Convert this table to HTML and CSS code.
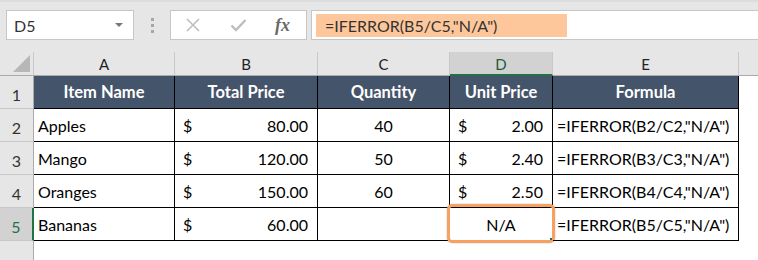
FILE: index.html
```html
<!DOCTYPE html>
<html>
<head>
<meta charset="utf-8">
<link rel="stylesheet" href="styles.css">
</head>
<body>
<div class="app">
  <div class="toolbar">
    <div class="namebox">
      <span class="cellref">D5</span>
      <span class="caret"></span>
    </div>
    <div class="grip"><i></i><i></i><i></i></div>
    <div class="fxbuttons">
      <svg class="btn" width="16" height="16" viewBox="0 0 16 16"><path d="M2 2 L14 14 M14 2 L2 14" stroke="#bdbdbd" stroke-width="1.6" fill="none"/></svg>
      <svg class="btn" width="17" height="16" viewBox="0 0 17 16"><path d="M1.5 8.5 L6 13 L15.5 3" stroke="#bdbdbd" stroke-width="2.4" fill="none"/></svg>
      <span class="fx">fx</span>
    </div>
    <div class="formulabar">
      <span class="formula">=IFERROR(B5/C5,"N/A")</span>
    </div>
  </div>

  <div class="sheet">
    <div class="corner"><span class="tri"></span></div>
    <div class="colhead">A</div>
    <div class="colhead">B</div>
    <div class="colhead">C</div>
    <div class="colhead active">D</div>
    <div class="colhead">E</div>
    <div class="colhead filler"></div>

    <div class="rowhead">1</div>
    <div class="cell th">Item Name</div>
    <div class="cell th">Total Price</div>
    <div class="cell th">Quantity</div>
    <div class="cell th">Unit Price</div>
    <div class="cell th">Formula</div>
    <div class="blank"></div>

    <div class="rowhead">2</div>
    <div class="cell">Apples</div>
    <div class="cell money"><span>$</span><span>80.00</span></div>
    <div class="cell center">40</div>
    <div class="cell money"><span>$</span><span>2.00</span></div>
    <div class="cell">=IFERROR(B2/C2,"N/A")</div>
    <div class="blank"></div>

    <div class="rowhead">3</div>
    <div class="cell">Mango</div>
    <div class="cell money"><span>$</span><span>120.00</span></div>
    <div class="cell center">50</div>
    <div class="cell money"><span>$</span><span>2.40</span></div>
    <div class="cell">=IFERROR(B3/C3,"N/A")</div>
    <div class="blank"></div>

    <div class="rowhead">4</div>
    <div class="cell">Oranges</div>
    <div class="cell money"><span>$</span><span>150.00</span></div>
    <div class="cell center">60</div>
    <div class="cell money"><span>$</span><span>2.50</span></div>
    <div class="cell">=IFERROR(B4/C4,"N/A")</div>
    <div class="blank"></div>

    <div class="rowhead active">5</div>
    <div class="cell">Bananas</div>
    <div class="cell money"><span>$</span><span>60.00</span></div>
    <div class="cell center"></div>
    <div class="cell center selected">N/A<span class="focus"><span class="handle"></span></span></div>
    <div class="cell">=IFERROR(B5/C5,"N/A")</div>
    <div class="blank"></div>

    <div class="rowhead rest"></div>
    <div class="blank"></div>
    <div class="blank"></div>
    <div class="blank"></div>
    <div class="blank"></div>
    <div class="blank"></div>
    <div class="blank"></div>
  </div>
</div>
</body>
</html>
```

FILE: styles.css
```css
* { box-sizing: border-box; }

html, body {
  margin: 0;
  padding: 0;
  background: #ffffff;
}

.app {
  width: 758px;
  height: 260px;
  overflow: hidden;
  font-family: Lato, "Open Sans", sans-serif;
  color: #000;
}

/* ---------- formula bar strip ---------- */
.toolbar {
  height: 52px;
  background: #e6e6e6;
  border-top: 2px solid #dcdcdc;
  display: flex;
  align-items: flex-start;
  padding-top: 8px;
  padding-left: 6px;
}

.namebox {
  width: 128px;
  height: 30px;
  background: #fff;
  border: 1px solid #c6c6c6;
  display: flex;
  align-items: center;
  justify-content: space-between;
  padding: 0 10px 0 7px;
}

.cellref {
  font-size: 16px;
  color: #333;
}

.caret {
  width: 0;
  height: 0;
  border-left: 4px solid transparent;
  border-right: 4px solid transparent;
  border-top: 4px solid #777;
}

.grip {
  width: 36px;
  height: 30px;
  display: flex;
  flex-direction: column;
  align-items: center;
  justify-content: center;
  gap: 3px;
}

.grip i {
  display: block;
  width: 3px;
  height: 3px;
  background: #a6a6a6;
}

.fxbuttons {
  width: 137px;
  height: 30px;
  background: #fff;
  border: 1px solid #c6c6c6;
  display: flex;
  align-items: center;
  padding-left: 14px;
  gap: 29px;
}

.fx {
  font-family: "Liberation Serif", serif;
  font-style: italic;
  font-weight: 700;
  font-size: 18px;
  color: #6a6a6a;
  margin-left: -1px;
}

.formulabar {
  flex: 1;
  height: 30px;
  margin-left: 4px;
  background: #fff;
  border: 1px solid #c6c6c6;
  border-right: none;
  padding: 3px 0 0 4px;
}

.formula {
  display: inline-block;
  width: 251px;
  height: 23px;
  line-height: 23px;
  background: #fdc79b;
  padding-left: 9px;
  font-size: 16px;
  color: #333;
}

/* ---------- grid ---------- */
.sheet {
  display: grid;
  grid-template-columns: 34px 141px 143px 132px 103px 186px 1fr;
  grid-template-rows: 24px repeat(5, 33px) 1fr;
  height: 208px;
}

.corner {
  background: #e6e6e6;
  border-right: 1px solid #c8c8c8;
  border-bottom: 1px solid #ababab;
  position: relative;
}

.tri {
  position: absolute;
  right: 3px;
  bottom: 3px;
  width: 0;
  height: 0;
  border-left: 17px solid transparent;
  border-bottom: 17px solid #b7b7b7;
}

.colhead {
  background: #e6e6e6;
  border-right: 1px solid #c8c8c8;
  border-bottom: 1px solid #ababab;
  display: flex;
  align-items: center;
  justify-content: center;
  font-size: 15px;
  color: #222;
  padding-top: 1px;
}

.colhead.active {
  background: #d2d2d2;
  border-bottom: 2px solid #217346;
  color: #1d5c3a;
}

.colhead.filler {
  border-right: none;
}

.rowhead {
  background: #e6e6e6;
  border-right: 1px solid #ababab;
  border-bottom: 1px solid #c8c8c8;
  display: flex;
  align-items: flex-end;
  justify-content: center;
  padding-bottom: 4px;
  font-size: 16px;
  color: #333;
}

.rowhead.active {
  background: #d2d2d2;
  border-right: 2px solid #217346;
  color: #217346;
}

.rowhead.rest {
  border-bottom: none;
}

.cell {
  border-right: 1px solid #000;
  border-bottom: 1px solid #000;
  display: flex;
  align-items: flex-end;
  padding: 0 4px 6px 4px;
  font-size: 16px;
  white-space: nowrap;
  position: relative;
}

.cell.th {
  background: #44546a;
  color: #fff;
  font-weight: 700;
  font-size: 16.5px;
  justify-content: center;
  align-items: center;
  padding: 0;
}

.cell.money {
  justify-content: space-between;
  padding-left: 8px;
  padding-right: 9px;
}

.cell.center {
  justify-content: center;
}

.blank {
  background: #fff;
}

/* active-cell frame */
.focus {
  position: absolute;
  left: -3px;
  top: -4px;
  right: -3px;
  bottom: -3px;
  border: 3px solid #f7a160;
  border-radius: 5px;
  box-shadow: 0 0 2px rgba(0, 0, 0, 0.25);
}

.handle {
  position: absolute;
  right: 0;
  bottom: 0;
  width: 2px;
  height: 2px;
  background: #217346;
}
```
